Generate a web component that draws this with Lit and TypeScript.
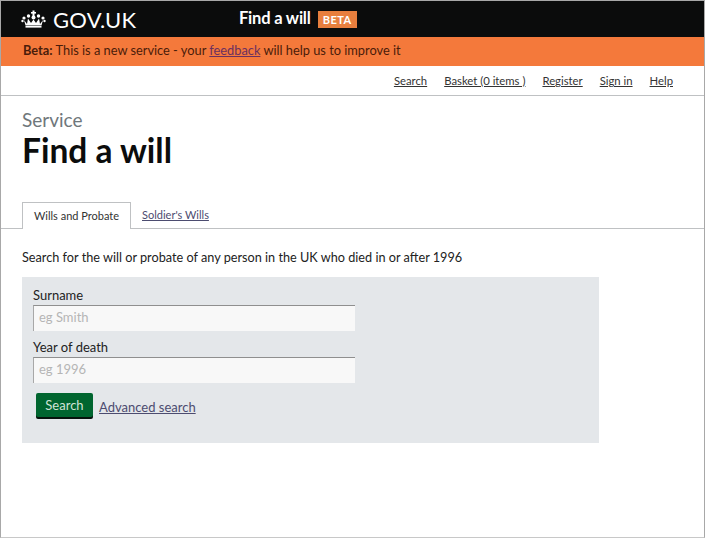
import { LitElement, html, css } from "lit";
import { customElement } from "lit/decorators.js";

@customElement("app-root")
export class AppRoot extends LitElement {
  static styles = css`
    :host { display: block; height: 538px; box-sizing: border-box; border: 1px solid #a8a8a8; border-bottom-color: #c8c8c8; font-family: Lato, sans-serif; color: #1b1b1b; background: #fff; overflow: hidden; font-size: 13px; }
    a { color: inherit; text-decoration: underline; }
    .top { height: 36px; background: #0b0c0c; color: #fff; display: flex; align-items: center; padding-left: 20px; box-sizing: border-box; }
    .crown { width: 25px; height: 18px; margin-right: 7px; }
    .logo { font-size: 22px; width: 186px; letter-spacing: 0.2px; }
    .svc { font-size: 16.5px; font-weight: 700; letter-spacing: -0.2px; margin: -2px 7px 0 0; }
    .tag { background: #e87f3e; color: #fff; font-size: 11px; font-weight: 700; letter-spacing: 0.5px; padding: 2px 5px 1px; line-height: 14px; }
    .beta { height: 29px; box-sizing: border-box; padding: 0 0 3px 22px; background: #f4793b; color: #4a1c0a; display: flex; align-items: center; font-size: 12.8px; white-space: pre; }
    .beta a { color: #6b3060; }
    .nav { height: 29px; border-bottom: 1px solid #bfc1c3; display: flex; justify-content: flex-end; align-items: center; gap: 17px; padding-right: 31px; font-size: 11.3px; color: #333; }
    .head { padding: 14px 21px 0; }
    .kicker { font-size: 19px; line-height: 20px; color: #6f777b; }
    h1 { margin: 0; font-size: 33.5px; line-height: 40px; font-weight: 700; color: #0b0c0c; }
    .tabs { margin-top: 32px; padding-left: 21px; display: flex; border-bottom: 1px solid #bfc1c3; height: 26px; font-size: 11px; }
    .tab { display: flex; align-items: center; padding: 0 11px 2px; height: 27px; box-sizing: border-box; }
    .tab.on { width: 109px; background: #fff; border: 1px solid #bfc1c3; border-bottom: none; color: #333; justify-content: center; padding: 0 0 2px; }
    .tab.off { color: #4c4c70; }
    .body { padding: 0 21px; }
    .intro { margin: 19px 0 11px; line-height: 18px; font-size: 12.7px; color: #222; }
    .panel { width: 577px; height: 166px; background: #e4e7ea; box-sizing: border-box; padding: 10px 11px; }
    label { display: block; line-height: 17px; padding-bottom: 1px; font-size: 13px; color: #222; }
    .input { width: 322px; height: 26px; box-sizing: border-box; background: #f8f8f8; border-top: 1px solid #8f8f8f; border-left: 1px solid #a8a8a8; padding: 0 0 3px 5px; display: flex; align-items: center; color: #b5b5b5; font-size: 13px; margin-bottom: 8px; }
    .actions { display: flex; align-items: center; gap: 6px; padding: 2px 0 0 3px; }
    .btn { width: 57px; height: 24px; box-sizing: border-box; background: #00652f; color: #cfe3d6; border-radius: 2px; box-shadow: 0 2px 0 #06130c; display: flex; align-items: center; justify-content: center; font-size: 13px; }
    .adv { color: #4c4c70; font-size: 13px; margin-top: 3px; }
  `;
  render() {
    return html`
      <div class="top">
        <svg class="crown" viewBox="0 0 25 18" fill="#fff" aria-hidden="true">
          <rect x="11.5" y="0.5" width="2" height="6"/><rect x="10" y="2" width="5" height="1.6"/>
          <circle cx="12.5" cy="7.5" r="2"/><circle cx="7.5" cy="6" r="1.7"/><circle cx="17.5" cy="6" r="1.7"/>
          <circle cx="3" cy="8" r="1.6"/><circle cx="22" cy="8" r="1.6"/><circle cx="1.5" cy="11" r="1.2"/><circle cx="23.5" cy="11" r="1.2"/>
          <path d="M3 10 L6 14 L7 8.5 L10 13 L12.5 9.5 L15 13 L18 8.5 L19 14 L22 10 L20.5 15.5 H4.5 Z"/>
          <rect x="4.5" y="16" width="16" height="1.6"/>
        </svg>
        <span class="logo">GOV.UK</span>
        <span class="svc">Find a will</span><span class="tag">BETA</span>
      </div>
      <div class="beta"><b>Beta:</b> This is a new service - your <a href="#">feedback</a> will help us to improve it</div>
      <div class="nav"><a href="#">Search</a><a href="#">Basket (0 items )</a><a href="#">Register</a><a href="#">Sign in</a><a href="#">Help</a></div>
      <div class="head">
        <div class="kicker">Service</div>
        <h1>Find a will</h1>
      </div>
      <div class="tabs">
        <div class="tab on">Wills and Probate</div>
        <div class="tab off"><a href="#">Soldier's Wills</a></div>
      </div>
      <div class="body">
        <p class="intro">Search for the will or probate of any person in the UK who died in or after 1996</p>
        <div class="panel">
          <label>Surname</label>
          <div class="input">eg Smith</div>
          <label>Year of death</label>
          <div class="input">eg 1996</div>
          <div class="actions"><div class="btn">Search</div><a class="adv" href="#">Advanced search</a></div>
        </div>
      </div>
    `;
  }
}
